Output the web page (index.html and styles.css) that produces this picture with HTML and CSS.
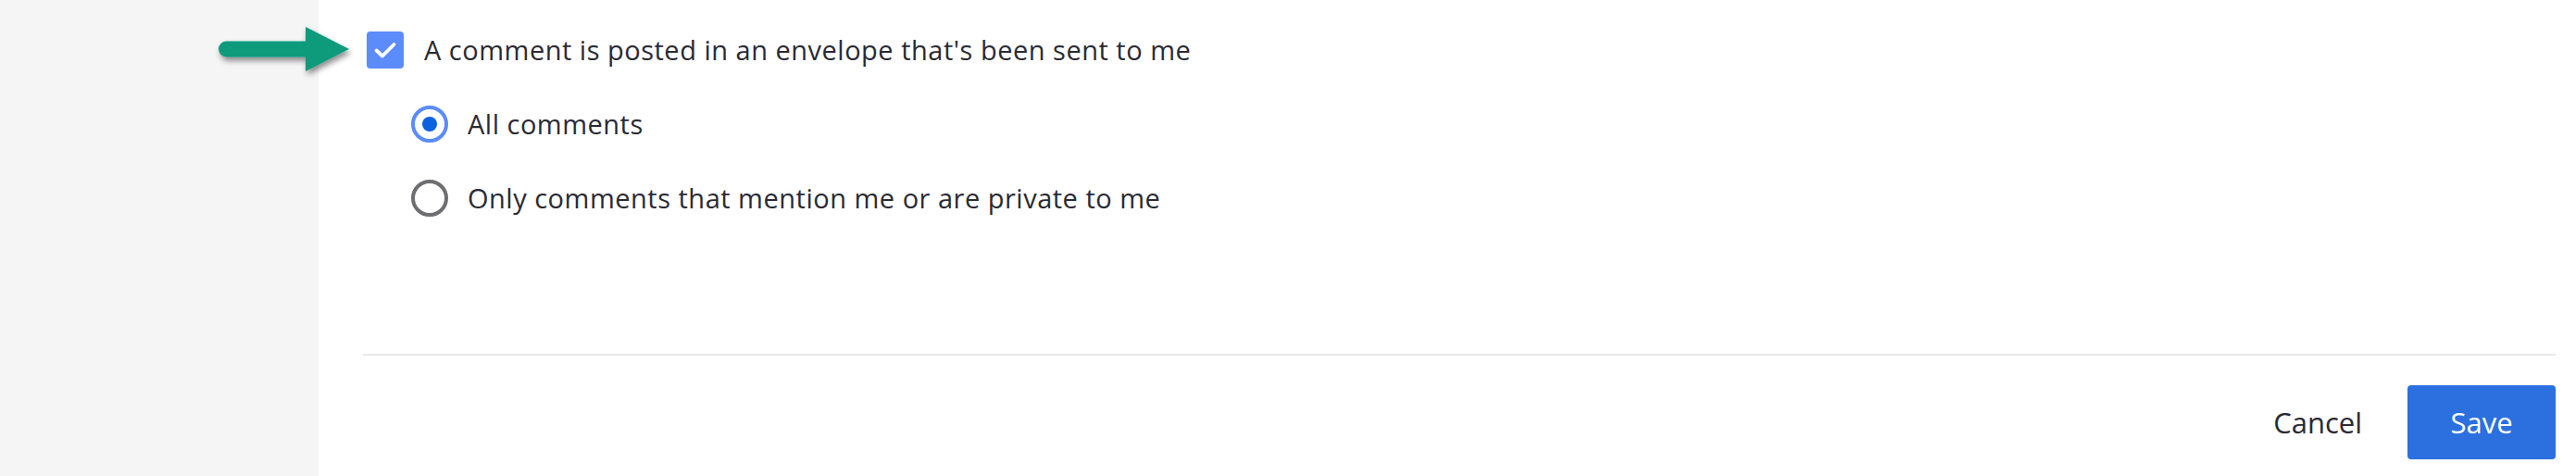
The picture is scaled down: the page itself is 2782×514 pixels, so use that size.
FILE: index.html
```html
<!DOCTYPE html>
<html lang="en">
<head>
<meta charset="utf-8">
<title>Notification settings</title>
<link rel="stylesheet" href="styles.css">
</head>
<body>
<div class="page">
  <aside class="sidebar"></aside>
  <main class="main">
    <svg class="pointer" width="160" height="72" viewBox="0 0 160 72" aria-hidden="true">
      <defs>
        <filter id="sh" x="-20%" y="-30%" width="140%" height="180%">
          <feDropShadow dx="2" dy="4" stdDeviation="3" flood-color="#000" flood-opacity="0.45"/>
        </filter>
      </defs>
      <g filter="url(#sh)">
        <path d="M8.5 24.5 H94 V9 L141 33 L94 57 V41.5 H8.5 A8.5 8.5 0 0 1 8.5 24.5 Z" fill="#0a9b7c"/>
      </g>
    </svg>
    <div class="options">
      <label class="check-row">
        <span class="checkbox">
          <svg width="26" height="20" viewBox="0 0 26 20"><path d="M3.5 10.5 L10 16.5 L22.5 4" fill="none" stroke="#fff" stroke-width="3.8" stroke-linecap="round" stroke-linejoin="round"/></svg>
        </span>
        <span class="label">A comment is posted in an envelope that's been sent to me</span>
      </label>
      <div class="radios">
        <label class="radio-row">
          <span class="radio checked"><span class="dot"></span></span>
          <span class="label">All comments</span>
        </label>
        <label class="radio-row">
          <span class="radio"></span>
          <span class="label">Only comments that mention me or are private to me</span>
        </label>
      </div>
    </div>
    <footer class="footer">
      <button class="btn-cancel">Cancel</button>
      <button class="btn-save">Save</button>
    </footer>
  </main>
</div>
</body>
</html>
```

FILE: styles.css
```css
html, body {
  margin: 0;
  padding: 0;
  background: #ffffff;
}
body {
  font-family: "Open Sans", "Noto Sans", sans-serif;
  color: #2a2a33;
}
.page {
  display: flex;
  width: 2782px;
  height: 514px;
}
.sidebar {
  width: 344px;
  flex: none;
  background: #f5f5f5;
}
.main {
  position: relative;
  flex: 1;
  display: flex;
  flex-direction: column;
  padding: 0 22px 0 48px;
}
.pointer {
  position: absolute;
  left: -108px;
  top: 20px;
  overflow: visible;
}
.options {
  padding-top: 34px;
  height: 384px;
  box-sizing: border-box;
  border-bottom: 2px solid #e9e9e9;
}
.check-row {
  display: flex;
  align-items: center;
  gap: 22px;
  margin-left: 4px;
  height: 40px;
}
.checkbox {
  width: 40px;
  height: 40px;
  border-radius: 4px;
  background: #5b8cfa;
  display: flex;
  align-items: center;
  justify-content: center;
  flex: none;
}
.label {
  font-size: 29px;
  line-height: 40px;
  letter-spacing: 0.5px;
}
.radios {
  display: flex;
  flex-direction: column;
  gap: 40px;
  margin-top: 40px;
  margin-left: 52px;
}
.radio-row {
  display: flex;
  align-items: center;
  gap: 21px;
  height: 40px;
}
.radio {
  width: 40px;
  height: 40px;
  box-sizing: border-box;
  border-radius: 50%;
  border: 4px solid #6e6e72;
  display: flex;
  align-items: center;
  justify-content: center;
  flex: none;
}
.radio.checked {
  border-color: #5b8cfa;
}
.dot {
  width: 16px;
  height: 16px;
  border-radius: 50%;
  background: #0a62e0;
}
.footer {
  display: flex;
  justify-content: flex-end;
  align-items: center;
  gap: 49px;
  padding-top: 32px;
}
.footer button {
  font-family: inherit;
  font-size: 31px;
  font-weight: 500;
  border: none;
  cursor: pointer;
}
.btn-cancel {
  background: transparent;
  color: #2a2a33;
  padding: 0;
}
.btn-save {
  width: 160px;
  height: 80px;
  border-radius: 4px;
  background: #2c6fdf;
  color: #ffffff;
}
```
